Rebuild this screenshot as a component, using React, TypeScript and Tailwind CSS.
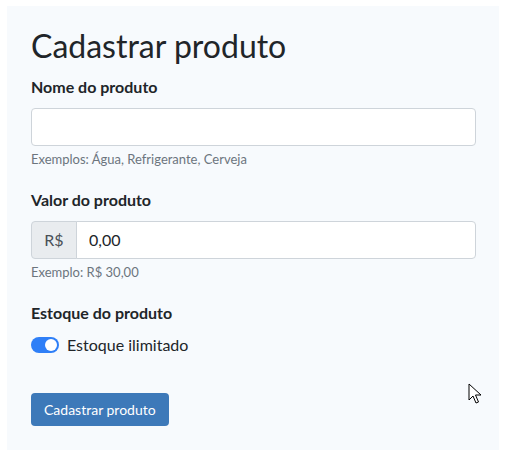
import { useState } from "react";

const font = { fontFamily: "Lato, 'Noto Sans', sans-serif" };

function Cursor() {
  return (
    <svg
      className="pointer-events-none absolute left-[468px] top-[383px]"
      width="14"
      height="22"
      viewBox="0 0 14 22"
    >
      <path
        d="M1 1 L1 17 L5 13 L8 20 L10.5 19 L7.5 12 L13 12 Z"
        fill="#ffffff"
        stroke="#000000"
        strokeWidth="1"
        strokeLinejoin="round"
      />
    </svg>
  );
}

export default function App() {
  const [unlimited, setUnlimited] = useState(true);

  return (
    <div className="relative min-h-[461px] bg-white pl-[7px] pt-[6px] text-[#212529]" style={font}>
      <div className="h-[444px] w-[492px] bg-[#f7fafd] px-[24px] pt-[22px]">
        <h1 className="text-[32px] leading-[36px] font-normal">Cadastrar produto</h1>

        <div className="mt-[11px]">
          <label className="block text-[16px] leading-[24px] font-bold">Nome do produto</label>
          <input
            className="mt-[9px] block h-[38px] w-[445px] rounded-[4px] border border-[#ced4da] bg-white px-3 text-[16px] outline-none"
            type="text"
          />
          <p className="mt-[3px] text-[13px] leading-[20px] text-[#6c757d]">
            Exemplos: Água, Refrigerante, Cerveja
          </p>
        </div>

        <div className="mt-[19px]">
          <label className="block text-[16px] leading-[24px] font-bold">Valor do produto</label>
          <div className="mt-[9px] flex h-[38px] w-[445px]">
            <span className="flex w-[46px] items-center justify-center rounded-l-[4px] border border-[#ced4da] bg-[#e9ecef] text-[16px] text-[#495057]">
              R$
            </span>
            <input
              className="-ml-px block flex-1 rounded-r-[4px] border border-[#ced4da] bg-white px-3 text-[16px] text-[#212529] outline-none"
              defaultValue="0,00"
              type="text"
            />
          </div>
          <p className="mt-[3px] text-[13px] leading-[20px] text-[#6c757d]">Exemplo: R$ 30,00</p>
        </div>

        <div className="mt-[19px]">
          <label className="block text-[16px] leading-[24px] font-bold">Estoque do produto</label>
          <label className="mt-[8px] flex items-center gap-[8px] text-[16px] leading-[24px]">
            <button
              type="button"
              onClick={() => setUnlimited(!unlimited)}
              className={
                unlimited
                  ? "flex h-[16px] w-[28px] items-center justify-end rounded-full bg-[#2f7ff7] px-[2px]"
                  : "flex h-[16px] w-[28px] items-center justify-start rounded-full border border-[#ced4da] bg-white px-[2px]"
              }
            >
              <span
                className={
                  unlimited
                    ? "h-[12px] w-[12px] rounded-full bg-white"
                    : "h-[12px] w-[12px] rounded-full bg-[#ced4da]"
                }
              />
            </button>
            Estoque ilimitado
          </label>
        </div>

        <button
          type="button"
          className="mt-[36px] h-[33px] rounded-[4px] bg-[#3d79b9] px-[13px] text-[14px] text-white"
        >
          Cadastrar produto
        </button>
      </div>
      <Cursor />
    </div>
  );
}
